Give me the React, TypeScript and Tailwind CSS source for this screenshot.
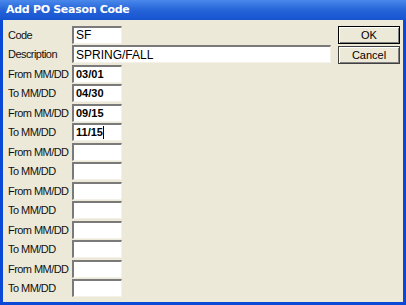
import React from 'react';

const rows = [
  { label: 'From MM/DD', value: '03/01' },
  { label: 'To MM/DD', value: '04/30' },
  { label: 'From MM/DD', value: '09/15' },
  { label: 'To MM/DD', value: '11/15', caret: true },
  { label: 'From MM/DD', value: '' },
  { label: 'To MM/DD', value: '' },
  { label: 'From MM/DD', value: '' },
  { label: 'To MM/DD', value: '' },
  { label: 'From MM/DD', value: '' },
  { label: 'To MM/DD', value: '' },
  { label: 'From MM/DD', value: '' },
  { label: 'To MM/DD', value: '' },
];

const Field = ({ value, width, bold, caret }: { value: string; width: string; bold?: boolean; caret?: boolean }) => (
  <div
    className={`${width} h-[18px] shrink-0 bg-white border-t-2 border-l-2 border-t-[#7a7a7a] border-l-[#7a7a7a] border-b border-r border-b-[#f4f2e8] border-r-[#f4f2e8] flex items-center pl-[2px] leading-none text-black ${bold ? 'font-bold text-[11px]' : 'text-[12px]'}`}
  >
    {value}
    {caret && <span className="inline-block w-px h-[13px] bg-black" />}
  </div>
);

const Label = ({ children }: { children: React.ReactNode }) => (
  <span className="w-[64px] shrink-0 whitespace-nowrap text-[11px] tracking-[-0.55px] text-[#111]">{children}</span>
);

const App = () => {
  return (
    <div className="w-[406px] h-[305px] flex flex-col bg-[#0a49d6] font-['Liberation_Sans',Arial,sans-serif]">
      <div className="h-[20px] shrink-0 flex items-center pl-[6px] bg-gradient-to-b from-[#4a88ea] via-[#2563d8] to-[#1653d0]">
        <span className="text-white text-[11px] font-bold font-['DejaVu_Sans',sans-serif] tracking-[-0.3px]">Add PO Season Code</span>
      </div>
      <div className="flex-1 mx-[3px] mb-[3px] bg-[#ece9d8] flex pt-[5px] pl-[5px]">
        <div className="flex flex-col">
          <div className="flex items-center h-[19.5px]">
            <Label>Code</Label>
            <Field value="SF" width="w-[50px]" />
          </div>
          <div className="flex items-center h-[19.5px]">
            <Label>Description</Label>
            <Field value="SPRING/FALL" width="w-[259px]" />
          </div>
          {rows.map((r, i) => (
            <div key={i} className="flex items-center h-[19.5px]">
              <Label>{r.label}</Label>
              <Field value={r.value} width="w-[50px]" bold caret={r.caret} />
            </div>
          ))}
        </div>
        <div className="flex flex-col gap-[2px] ml-[7px] pt-[1px]">
          <button className="w-[62px] h-[18px] border border-black bg-[#ece9d8] shadow-[inset_1px_1px_0_#ffffff,inset_-1px_-1px_0_#808080] text-[11px] text-black leading-none">
            OK
          </button>
          <button className="w-[62px] h-[18px] border border-[#404040] bg-[#ece9d8] shadow-[inset_1px_1px_0_#ffffff,inset_-1px_-1px_0_#808080] text-[11px] text-black leading-none">
            Cancel
          </button>
        </div>
      </div>
    </div>
  );
};

export default App;
